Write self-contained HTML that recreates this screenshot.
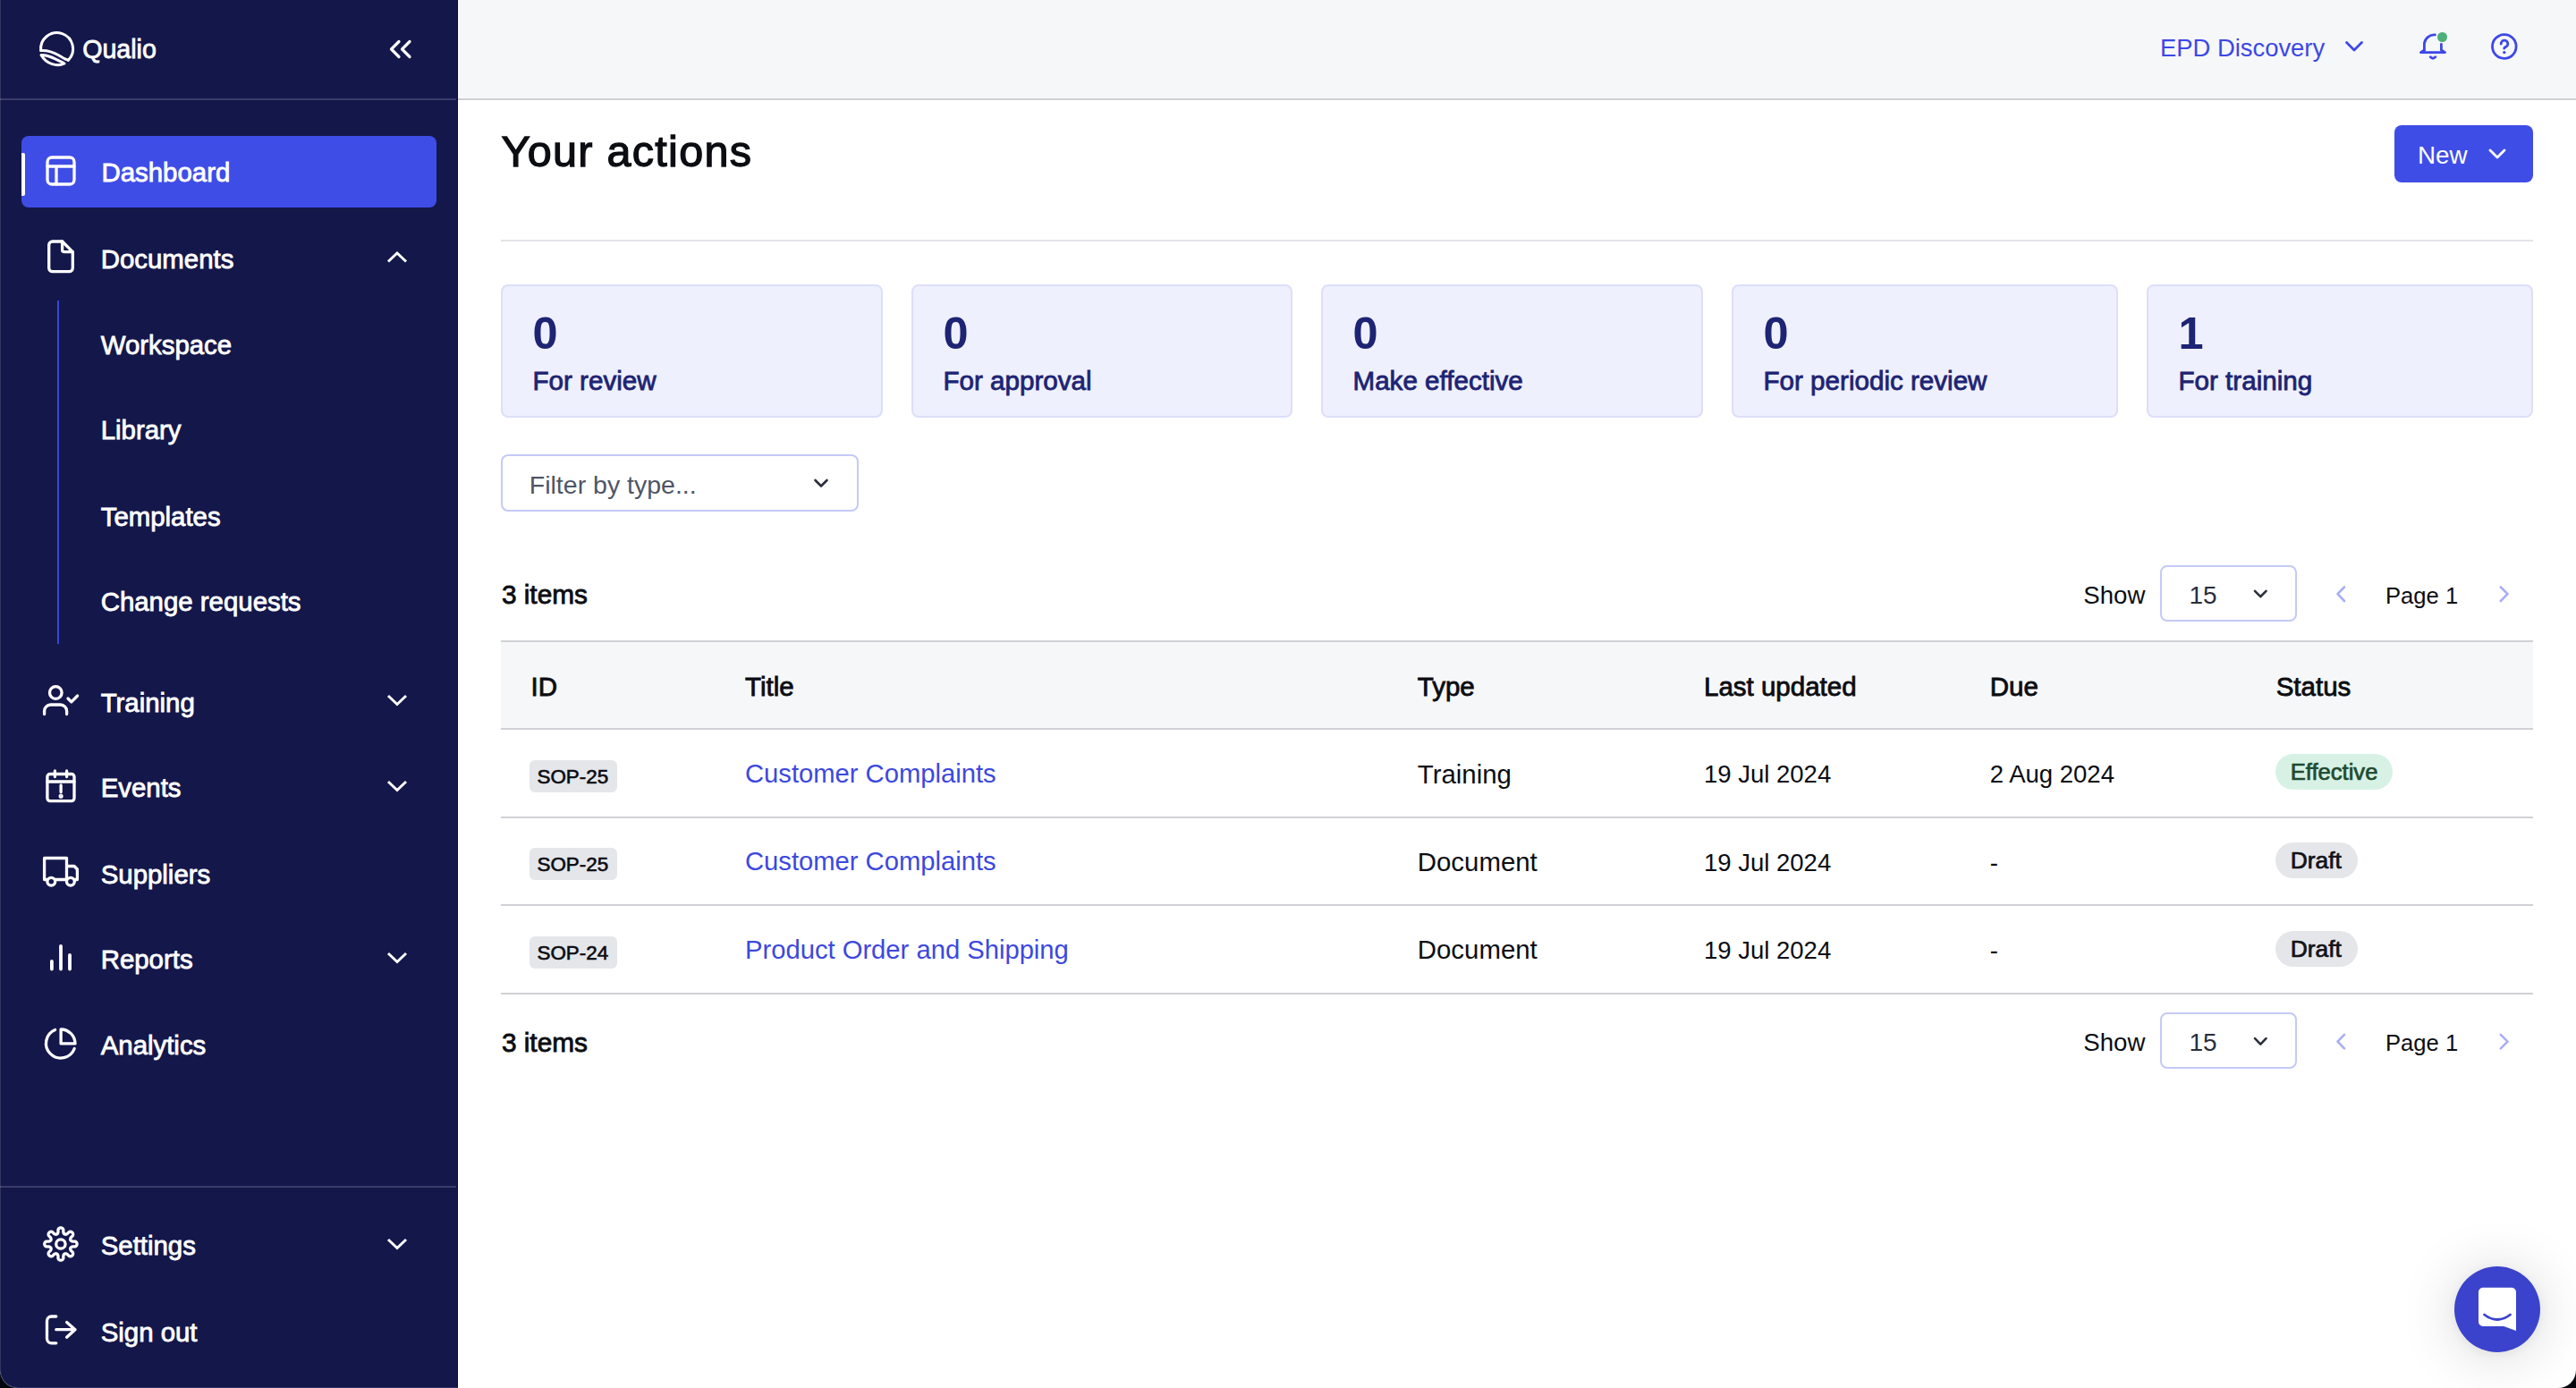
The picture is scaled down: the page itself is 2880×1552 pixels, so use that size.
<!DOCTYPE html>
<html><head><meta charset="utf-8"><title>Qualio</title>
<style>
html,body{margin:0;padding:0;background:#04070d;}
body{width:2880px;height:1552px;overflow:hidden;position:relative;font-family:"Liberation Sans",sans-serif;}
#app{position:absolute;left:0;top:0;width:2880px;height:1552px;background:#fff;border-radius:0 0 20px 20px;overflow:hidden;}
.t{position:absolute;line-height:1;white-space:nowrap;}
@media (max-width:2000px){body{width:1440px;height:776px;} #app{zoom:0.5;}}
</style></head><body><div id="app">
<div style="position:absolute;left:0px;top:0px;width:512px;height:1552px;background:#14174a"></div>
<div style="position:absolute;left:511px;top:0px;width:1px;height:1552px;background:#060b3e"></div>
<div style="position:absolute;left:0px;top:110px;width:510px;height:2px;background:#3a3c69"></div>
<div style="position:absolute;left:0px;top:1326px;width:510px;height:2px;background:#3a3c69"></div>
<svg style="position:absolute;left:36px;top:26px" width="150" height="60" viewBox="0 0 150 60" fill="none" stroke="#fff" stroke-width="3" stroke-linecap="round" stroke-linejoin="round">
<path d="M9.7 30.5 A18 18 0 1 1 40.4 41.2"/>
<path d="M9.7 30.5 C17 30 23 32 30 36 C34 38.5 37.5 41 40.4 41.2"/>
<path d="M10 35.5 C18 35 26 40 36 45 C28 49 16 46 10 35.5 Z"/>
</svg>
<div class="t" style="left:92.2px;top:41.4px;font-size:28.6px;font-weight:400;color:#ffffff;-webkit-text-stroke:0.80px #ffffff;">Qualio</div>
<svg style="position:absolute;left:420px;top:30px" width="60" height="50" viewBox="420 30 60 50" fill="none" stroke="#fff" stroke-width="3.2" stroke-linecap="round" stroke-linejoin="round">
<path d="M446 46.5 L437.5 55 L446 63.5"/><path d="M458 46.5 L449.5 55 L458 63.5"/></svg>
<div style="position:absolute;left:24px;top:152px;width:464px;height:80px;background:#3f4de7;border-radius:8px"></div>
<div style="position:absolute;left:24px;top:171px;width:4px;height:48px;background:#fff;border-radius:0 2px 2px 0"></div>
<svg style="position:absolute;left:0;top:0;overflow:visible" width="512" height="1552" viewBox="0 0 512 1552" fill="none" stroke="#fff" stroke-width="3.3" stroke-linecap="round" stroke-linejoin="round"><rect x="53" y="176" width="30" height="30" rx="5"/><path d="M53 186 H83 M63 186 V206"/><path d="M69.6 270 H58.7 A4 4 0 0 0 54.7 274 V299.7 A4 4 0 0 0 58.7 303.7 H77.3 A4 4 0 0 0 81.3 299.7 V281.7 Z"/><path d="M69.6 270 V279.5 A2.3 2.3 0 0 0 71.9 281.7 H81.3"/><circle cx="62.3" cy="774.5" r="6.8"/><path d="M49.6 798.5 V795 A7 7 0 0 1 56.6 788 H67.6 A7 7 0 0 1 74.6 795 V798.5"/><path d="M76 781 L79.8 784.8 L86.6 778"/><rect x="52.9" y="865.5" width="30.1" height="30.1" rx="3"/><path d="M52.9 874 H83 M61.4 862 V868.5 M74.6 862 V868.5 M68.1 878 V885.8"/><circle cx="68.1" cy="890.3" r="0.9" fill="#fff"/><path d="M52 983.5 H49.6 V959.5 H74.5 V983.5 H62 M74.5 968.5 H83 L86.4 972 V983.5 H84 M74.5 983.5 H73.5"/><circle cx="57.3" cy="985.8" r="4.4"/><circle cx="78.9" cy="985.8" r="4.4"/><path d="M57.9 1075 V1083.5 M68 1058 V1083.5 M78 1068 V1083.5" stroke-width="3.8"/><path d="M61.6 1151.5 A16.4 16.4 0 1 0 83.2 1172.5"/><path d="M68.1 1151 V1166.9 H84 A16 16 0 0 0 68.1 1151 Z"/><path d="M86.10 1391.00 L86.06 1391.48 L85.95 1391.95 L85.75 1392.41 L85.47 1392.85 L85.09 1393.26 L84.58 1393.64 L83.79 1393.94 L81.44 1393.88 L80.65 1394.06 L80.13 1394.28 L79.72 1394.50 L79.40 1394.74 L79.14 1394.98 L78.95 1395.24 L78.80 1395.52 L78.71 1395.81 L78.67 1396.13 L78.67 1396.49 L78.74 1396.88 L78.86 1397.33 L79.08 1397.85 L79.51 1398.54 L81.22 1400.15 L81.56 1400.93 L81.66 1401.56 L81.63 1402.12 L81.52 1402.63 L81.33 1403.09 L81.08 1403.51 L80.77 1403.87 L80.41 1404.18 L79.99 1404.43 L79.53 1404.62 L79.02 1404.73 L78.46 1404.76 L77.83 1404.66 L77.05 1404.32 L75.44 1402.61 L74.75 1402.18 L74.23 1401.96 L73.78 1401.84 L73.39 1401.77 L73.03 1401.77 L72.71 1401.81 L72.42 1401.90 L72.14 1402.05 L71.88 1402.24 L71.64 1402.50 L71.40 1402.82 L71.18 1403.23 L70.96 1403.75 L70.78 1404.54 L70.84 1406.89 L70.54 1407.68 L70.16 1408.19 L69.75 1408.57 L69.31 1408.85 L68.85 1409.05 L68.38 1409.16 L67.90 1409.20 L67.42 1409.16 L66.95 1409.05 L66.49 1408.85 L66.05 1408.57 L65.64 1408.19 L65.26 1407.68 L64.96 1406.89 L65.02 1404.54 L64.84 1403.75 L64.62 1403.23 L64.40 1402.82 L64.16 1402.50 L63.92 1402.24 L63.66 1402.05 L63.38 1401.90 L63.09 1401.81 L62.77 1401.77 L62.41 1401.77 L62.02 1401.84 L61.57 1401.96 L61.05 1402.18 L60.36 1402.61 L58.75 1404.32 L57.97 1404.66 L57.34 1404.76 L56.78 1404.73 L56.27 1404.62 L55.81 1404.43 L55.39 1404.18 L55.03 1403.87 L54.72 1403.51 L54.47 1403.09 L54.28 1402.63 L54.17 1402.12 L54.14 1401.56 L54.24 1400.93 L54.58 1400.15 L56.29 1398.54 L56.72 1397.85 L56.94 1397.33 L57.06 1396.88 L57.13 1396.49 L57.13 1396.13 L57.09 1395.81 L57.00 1395.52 L56.85 1395.24 L56.66 1394.98 L56.40 1394.74 L56.08 1394.50 L55.67 1394.28 L55.15 1394.06 L54.36 1393.88 L52.01 1393.94 L51.22 1393.64 L50.71 1393.26 L50.33 1392.85 L50.05 1392.41 L49.85 1391.95 L49.74 1391.48 L49.70 1391.00 L49.74 1390.52 L49.85 1390.05 L50.05 1389.59 L50.33 1389.15 L50.71 1388.74 L51.22 1388.36 L52.01 1388.06 L54.36 1388.12 L55.15 1387.94 L55.67 1387.72 L56.08 1387.50 L56.40 1387.26 L56.66 1387.02 L56.85 1386.76 L57.00 1386.48 L57.09 1386.19 L57.13 1385.87 L57.13 1385.51 L57.06 1385.12 L56.94 1384.67 L56.72 1384.15 L56.29 1383.46 L54.58 1381.85 L54.24 1381.07 L54.14 1380.44 L54.17 1379.88 L54.28 1379.37 L54.47 1378.91 L54.72 1378.49 L55.03 1378.13 L55.39 1377.82 L55.81 1377.57 L56.27 1377.38 L56.78 1377.27 L57.34 1377.24 L57.97 1377.34 L58.75 1377.68 L60.36 1379.39 L61.05 1379.82 L61.57 1380.04 L62.02 1380.16 L62.41 1380.23 L62.77 1380.23 L63.09 1380.19 L63.38 1380.10 L63.66 1379.95 L63.92 1379.76 L64.16 1379.50 L64.40 1379.18 L64.62 1378.77 L64.84 1378.25 L65.02 1377.46 L64.96 1375.11 L65.26 1374.32 L65.64 1373.81 L66.05 1373.43 L66.49 1373.15 L66.95 1372.95 L67.42 1372.84 L67.90 1372.80 L68.38 1372.84 L68.85 1372.95 L69.31 1373.15 L69.75 1373.43 L70.16 1373.81 L70.54 1374.32 L70.84 1375.11 L70.78 1377.46 L70.96 1378.25 L71.18 1378.77 L71.40 1379.18 L71.64 1379.50 L71.88 1379.76 L72.14 1379.95 L72.42 1380.10 L72.71 1380.19 L73.03 1380.23 L73.39 1380.23 L73.78 1380.16 L74.23 1380.04 L74.75 1379.82 L75.44 1379.39 L77.05 1377.68 L77.83 1377.34 L78.46 1377.24 L79.02 1377.27 L79.53 1377.38 L79.99 1377.57 L80.41 1377.82 L80.77 1378.13 L81.08 1378.49 L81.33 1378.91 L81.52 1379.37 L81.63 1379.88 L81.66 1380.44 L81.56 1381.07 L81.22 1381.85 L79.51 1383.46 L79.08 1384.15 L78.86 1384.67 L78.74 1385.12 L78.67 1385.51 L78.67 1385.87 L78.71 1386.19 L78.80 1386.48 L78.95 1386.76 L79.14 1387.02 L79.40 1387.26 L79.72 1387.50 L80.13 1387.72 L80.65 1387.94 L81.44 1388.12 L83.79 1388.06 L84.58 1388.36 L85.09 1388.74 L85.47 1389.15 L85.75 1389.59 L85.95 1390.05 L86.06 1390.52 L86.10 1391.00 Z"/><circle cx="67.9" cy="1391.0" r="5.2"/><path d="M62.8 1472 H57.5 A5 5 0 0 0 52.5 1477 V1496.8 A5 5 0 0 0 57.5 1501.8 H62.8"/><path d="M62.8 1486.7 H84 M74.6 1478.6 L84 1486.7 L74.6 1495.2"/><path d="M434 292.5 L444 283.0 L454 292.5" stroke-width="3" stroke-linecap="butt" stroke-linejoin="miter"/><path d="M434 778 L444 787.5 L454 778" stroke-width="3" stroke-linecap="butt" stroke-linejoin="miter"/><path d="M434 874 L444 883.5 L454 874" stroke-width="3" stroke-linecap="butt" stroke-linejoin="miter"/><path d="M434 1066 L444 1075.5 L454 1066" stroke-width="3" stroke-linecap="butt" stroke-linejoin="miter"/><path d="M434 1386 L444 1395.5 L454 1386" stroke-width="3" stroke-linecap="butt" stroke-linejoin="miter"/></svg>
<div style="position:absolute;left:64px;top:336px;width:2px;height:384px;background:#3847d6"></div>
<div class="t" style="left:113.5px;top:178.3px;font-size:29.4px;font-weight:400;color:#ffffff;-webkit-text-stroke:0.82px #ffffff;">Dashboard</div>
<div class="t" style="left:112.7px;top:274.5px;font-size:29.4px;font-weight:400;color:#ffffff;-webkit-text-stroke:0.82px #ffffff;">Documents</div>
<div class="t" style="left:112.7px;top:370.7px;font-size:29.4px;font-weight:400;color:#ffffff;-webkit-text-stroke:0.82px #ffffff;">Workspace</div>
<div class="t" style="left:112.7px;top:466.4px;font-size:29.4px;font-weight:400;color:#ffffff;-webkit-text-stroke:0.82px #ffffff;">Library</div>
<div class="t" style="left:112.7px;top:562.6px;font-size:29.4px;font-weight:400;color:#ffffff;-webkit-text-stroke:0.82px #ffffff;">Templates</div>
<div class="t" style="left:112.7px;top:658.1px;font-size:29.4px;font-weight:400;color:#ffffff;-webkit-text-stroke:0.82px #ffffff;">Change requests</div>
<div class="t" style="left:112.7px;top:770.9px;font-size:29.4px;font-weight:400;color:#ffffff;-webkit-text-stroke:0.82px #ffffff;">Training</div>
<div class="t" style="left:112.7px;top:866.3px;font-size:29.4px;font-weight:400;color:#ffffff;-webkit-text-stroke:0.82px #ffffff;">Events</div>
<div class="t" style="left:112.7px;top:962.5px;font-size:29.4px;font-weight:400;color:#ffffff;-webkit-text-stroke:0.82px #ffffff;">Suppliers</div>
<div class="t" style="left:112.7px;top:1058.3px;font-size:29.4px;font-weight:400;color:#ffffff;-webkit-text-stroke:0.82px #ffffff;">Reports</div>
<div class="t" style="left:112.7px;top:1154.4px;font-size:29.4px;font-weight:400;color:#ffffff;-webkit-text-stroke:0.82px #ffffff;">Analytics</div>
<div class="t" style="left:112.7px;top:1378.1px;font-size:29.4px;font-weight:400;color:#ffffff;-webkit-text-stroke:0.82px #ffffff;">Settings</div>
<div class="t" style="left:112.7px;top:1474.8px;font-size:29.4px;font-weight:400;color:#ffffff;-webkit-text-stroke:0.82px #ffffff;">Sign out</div>
<div style="position:absolute;left:512px;top:0px;width:2368px;height:110px;background:#f6f7f9"></div>
<div style="position:absolute;left:512px;top:110px;width:2368px;height:2px;background:#d0d1d6"></div>
<div class="t" style="left:2415.0px;top:39.7px;font-size:27.4px;font-weight:400;color:#3c48e6;">EPD Discovery</div>
<svg style="position:absolute;left:0;top:0;overflow:visible" width="2880" height="120" viewBox="0 0 2880 120" fill="none" stroke="#3c48e6" stroke-width="2.8" stroke-linecap="round" stroke-linejoin="round">
<path d="M2623.5 47.5 L2632 56 L2640.5 47.5"/>
<path d="M2710.4 56 V48.5 A11.5 11.5 0 0 1 2722.4 38.8"/>
<path d="M2729.4 49.5 V56 M2706.5 58.6 H2733.5 M2706.5 58.6 L2710.4 56 M2733.5 58.6 L2729.4 56"/>
<path d="M2717.2 63.8 Q2720 66.5 2722.8 63.8"/>
<circle cx="2799.8" cy="52" r="13.3"/>
<path d="M2796.2 49.2 A3.8 3.8 0 1 1 2801.1 52.6 Q2799.7 53.3 2799.7 54.2"/>
<circle cx="2799.8" cy="58.6" r="1.7" fill="#3c48e6" stroke="none"/>
</svg>
<div style="position:absolute;left:2725.3px;top:35.8px;width:10.8px;height:10.8px;border-radius:50%;background:#4caf7c"></div>
<div class="t" style="left:560.5px;top:145.2px;font-size:48.5px;font-weight:400;color:#0c0d12;letter-spacing:1.3px;-webkit-text-stroke:1.30px #0c0d12;">Your actions</div>
<div style="position:absolute;left:2677px;top:140px;width:155px;height:64px;background:#3f4de7;border-radius:8px"></div>
<div class="t" style="left:2703.0px;top:160.0px;font-size:27.8px;font-weight:400;color:#fff;">New</div>
<svg style="position:absolute;left:0;top:0;overflow:visible" width="2880" height="220" viewBox="0 0 2880 220" fill="none" stroke="#fff" stroke-width="2.8" stroke-linecap="round" stroke-linejoin="round"><path d="M2784 168 L2792 176 L2800 168"/></svg>
<div style="position:absolute;left:560px;top:268px;width:2272px;height:2px;background:#e3e4e8"></div>
<div style="position:absolute;left:560px;top:318px;width:423px;height:145px;background:#eff0fd;border:2px solid #dcdff9;border-radius:8px"></div>
<div class="t" style="left:595.5px;top:347.9px;font-size:50.5px;font-weight:700;color:#1d2473;">0</div>
<div class="t" style="left:595.5px;top:410.9px;font-size:29.6px;font-weight:400;color:#1d2473;-webkit-text-stroke:0.83px #1d2473;">For review</div>
<div style="position:absolute;left:1019px;top:318px;width:422px;height:145px;background:#eff0fd;border:2px solid #dcdff9;border-radius:8px"></div>
<div class="t" style="left:1054.5px;top:347.9px;font-size:50.5px;font-weight:700;color:#1d2473;">0</div>
<div class="t" style="left:1054.5px;top:410.9px;font-size:29.6px;font-weight:400;color:#1d2473;-webkit-text-stroke:0.83px #1d2473;">For approval</div>
<div style="position:absolute;left:1477px;top:318px;width:423px;height:145px;background:#eff0fd;border:2px solid #dcdff9;border-radius:8px"></div>
<div class="t" style="left:1512.5px;top:347.9px;font-size:50.5px;font-weight:700;color:#1d2473;">0</div>
<div class="t" style="left:1512.5px;top:410.9px;font-size:29.6px;font-weight:400;color:#1d2473;-webkit-text-stroke:0.83px #1d2473;">Make effective</div>
<div style="position:absolute;left:1936px;top:318px;width:428px;height:145px;background:#eff0fd;border:2px solid #dcdff9;border-radius:8px"></div>
<div class="t" style="left:1971.5px;top:347.9px;font-size:50.5px;font-weight:700;color:#1d2473;">0</div>
<div class="t" style="left:1971.5px;top:410.9px;font-size:29.6px;font-weight:400;color:#1d2473;-webkit-text-stroke:0.83px #1d2473;">For periodic review</div>
<div style="position:absolute;left:2400px;top:318px;width:428px;height:145px;background:#eff0fd;border:2px solid #dcdff9;border-radius:8px"></div>
<div class="t" style="left:2435.5px;top:347.9px;font-size:50.5px;font-weight:700;color:#1d2473;">1</div>
<div class="t" style="left:2435.5px;top:410.9px;font-size:29.6px;font-weight:400;color:#1d2473;-webkit-text-stroke:0.83px #1d2473;">For training</div>
<div style="position:absolute;left:560px;top:508px;width:396px;height:60px;background:#fff;border:2px solid #c5c9f7;border-radius:8px"></div>
<div class="t" style="left:591.8px;top:527.5px;font-size:28.5px;font-weight:400;color:#4f5565;">Filter by type...</div>
<div class="t" style="left:560.9px;top:650.2px;font-size:29.8px;font-weight:400;color:#0c0d12;-webkit-text-stroke:0.83px #0c0d12;">3 items</div>
<div class="t" style="left:2329.3px;top:651.8px;font-size:27.6px;font-weight:400;color:#0c0d12;">Show</div>
<div style="position:absolute;left:2415px;top:632px;width:149px;height:59px;background:#fff;border:2px solid #c5c9f7;border-radius:8px"></div>
<div class="t" style="left:2447.5px;top:651.5px;font-size:28px;font-weight:400;color:#2b2e3b;">15</div>
<div class="t" style="left:2667.0px;top:653.5px;font-size:25.6px;font-weight:400;color:#0c0d12;">Page 1</div>
<div class="t" style="left:560.9px;top:1150.6px;font-size:29.8px;font-weight:400;color:#0c0d12;-webkit-text-stroke:0.83px #0c0d12;">3 items</div>
<div class="t" style="left:2329.3px;top:1152.2px;font-size:27.6px;font-weight:400;color:#0c0d12;">Show</div>
<div style="position:absolute;left:2415px;top:1132.4px;width:149px;height:59px;background:#fff;border:2px solid #c5c9f7;border-radius:8px"></div>
<div class="t" style="left:2447.5px;top:1151.9px;font-size:28px;font-weight:400;color:#2b2e3b;">15</div>
<div class="t" style="left:2667.0px;top:1153.9px;font-size:25.6px;font-weight:400;color:#0c0d12;">Page 1</div>
<svg style="position:absolute;left:0;top:0;overflow:visible" width="2880" height="1552" viewBox="0 0 2880 1552" fill="none" stroke="#2b2e3b" stroke-width="2.6" stroke-linecap="round" stroke-linejoin="round"><path d="M911.5 537 L918 543.5 L924.5 537"/><path d="M2521 660.8 L2527.3 667.2 L2533.5 660.8"/><path d="M2521 1161.1999999999998 L2527.3 1167.6 L2533.5 1161.1999999999998"/></svg>
<svg style="position:absolute;left:0;top:0;overflow:visible" width="2880" height="1552" viewBox="0 0 2880 1552" fill="none" stroke="#a8aef5" stroke-width="2.6" stroke-linecap="round" stroke-linejoin="round"><path d="M2621 656.5 L2613.5 664.2 L2621 672"/><path d="M2795.8 656.5 L2803.5 664.2 L2795.8 672"/><path d="M2621 1156.9 L2613.5 1164.6 L2621 1172.4"/><path d="M2795.8 1156.9 L2803.5 1164.6 L2795.8 1172.4"/></svg>
<div style="position:absolute;left:560px;top:716px;width:2272px;height:2px;background:#d0d1d6"></div>
<div style="position:absolute;left:560px;top:718px;width:2272px;height:96px;background:#f6f7f9"></div>
<div style="position:absolute;left:560px;top:814px;width:2272px;height:2px;background:#d0d1d6"></div>
<div style="position:absolute;left:560px;top:913px;width:2272px;height:2px;background:#d0d1d6"></div>
<div style="position:absolute;left:560px;top:1011px;width:2272px;height:2px;background:#d0d1d6"></div>
<div style="position:absolute;left:560px;top:1110px;width:2272px;height:2px;background:#d0d1d6"></div>
<div class="t" style="left:593.6px;top:752.8px;font-size:29.5px;font-weight:400;color:#0c0d12;-webkit-text-stroke:0.83px #0c0d12;">ID</div>
<div class="t" style="left:833.0px;top:752.8px;font-size:29.5px;font-weight:400;color:#0c0d12;-webkit-text-stroke:0.83px #0c0d12;">Title</div>
<div class="t" style="left:1584.8px;top:752.8px;font-size:29.5px;font-weight:400;color:#0c0d12;-webkit-text-stroke:0.83px #0c0d12;">Type</div>
<div class="t" style="left:1905.0px;top:752.8px;font-size:29.5px;font-weight:400;color:#0c0d12;-webkit-text-stroke:0.83px #0c0d12;">Last updated</div>
<div class="t" style="left:2224.8px;top:752.8px;font-size:29.5px;font-weight:400;color:#0c0d12;-webkit-text-stroke:0.83px #0c0d12;">Due</div>
<div class="t" style="left:2544.7px;top:752.8px;font-size:29.5px;font-weight:400;color:#0c0d12;-webkit-text-stroke:0.83px #0c0d12;">Status</div>
<div style="position:absolute;left:592px;top:850px;width:98px;height:36px;background:#e5e6ea;border-radius:6px"></div>
<div class="t" style="left:600.5px;top:858.0px;font-size:22.4px;font-weight:400;color:#0c0d12;-webkit-text-stroke:0.63px #0c0d12;">SOP-25</div>
<div class="t" style="left:833.0px;top:850.8px;font-size:29.2px;font-weight:400;color:#3c48e0;">Customer Complaints</div>
<div class="t" style="left:1584.8px;top:850.6px;font-size:29.4px;font-weight:400;color:#0c0d12;">Training</div>
<div class="t" style="left:1905.0px;top:852.2px;font-size:27.5px;font-weight:400;color:#0c0d12;">19 Jul 2024</div>
<div class="t" style="left:2224.8px;top:852.2px;font-size:27.5px;font-weight:400;color:#0c0d12;">2 Aug 2024</div>
<div style="position:absolute;left:2544px;top:843px;width:131px;height:40px;background:#d7f2e4;border-radius:20px"></div>
<div class="t" style="left:2560.7px;top:850.8px;font-size:25.6px;font-weight:400;color:#1e4b32;-webkit-text-stroke:0.72px #1e4b32;">Effective</div>
<div style="position:absolute;left:592px;top:948px;width:98px;height:36px;background:#e5e6ea;border-radius:6px"></div>
<div class="t" style="left:600.5px;top:956.0px;font-size:22.4px;font-weight:400;color:#0c0d12;-webkit-text-stroke:0.63px #0c0d12;">SOP-25</div>
<div class="t" style="left:833.0px;top:949.2px;font-size:29.2px;font-weight:400;color:#3c48e0;">Customer Complaints</div>
<div class="t" style="left:1584.8px;top:949.0px;font-size:29.4px;font-weight:400;color:#0c0d12;">Document</div>
<div class="t" style="left:1905.0px;top:950.6px;font-size:27.5px;font-weight:400;color:#0c0d12;">19 Jul 2024</div>
<div class="t" style="left:2224.8px;top:950.6px;font-size:27.5px;font-weight:400;color:#0c0d12;">-</div>
<div style="position:absolute;left:2544px;top:942px;width:92px;height:40px;background:#e5e6ea;border-radius:20px"></div>
<div class="t" style="left:2560.7px;top:949.2px;font-size:26.4px;font-weight:400;color:#111318;-webkit-text-stroke:0.74px #111318;">Draft</div>
<div style="position:absolute;left:592px;top:1047px;width:98px;height:36px;background:#e5e6ea;border-radius:6px"></div>
<div class="t" style="left:600.5px;top:1055.0px;font-size:22.4px;font-weight:400;color:#0c0d12;-webkit-text-stroke:0.63px #0c0d12;">SOP-24</div>
<div class="t" style="left:833.0px;top:1047.6px;font-size:29.2px;font-weight:400;color:#3c48e0;">Product Order and Shipping</div>
<div class="t" style="left:1584.8px;top:1047.4px;font-size:29.4px;font-weight:400;color:#0c0d12;">Document</div>
<div class="t" style="left:1905.0px;top:1049.0px;font-size:27.5px;font-weight:400;color:#0c0d12;">19 Jul 2024</div>
<div class="t" style="left:2224.8px;top:1049.0px;font-size:27.5px;font-weight:400;color:#0c0d12;">-</div>
<div style="position:absolute;left:2544px;top:1040.5px;width:92px;height:40px;background:#e5e6ea;border-radius:20px"></div>
<div class="t" style="left:2560.7px;top:1047.7px;font-size:26.4px;font-weight:400;color:#111318;-webkit-text-stroke:0.74px #111318;">Draft</div>
<div style="position:absolute;left:2744px;top:1416px;width:96px;height:96px;border-radius:50%;background:#3b43cc;box-shadow:0 2px 12px rgba(0,0,0,.06),0 4px 64px rgba(0,0,0,.16)"></div>
<svg style="position:absolute;left:0;top:0;overflow:visible" width="2880" height="1552" viewBox="0 0 2880 1552">
<path d="M2776 1439.8 H2808 A5 5 0 0 1 2813 1444.8 V1488 L2799.3 1482.9 H2776 A5 5 0 0 1 2771 1477.9 V1444.8 A5 5 0 0 1 2776 1439.8 Z" fill="#fff"/>
<path d="M2777.5 1470 Q2792 1481 2806.5 1470" fill="none" stroke="#3b43cc" stroke-width="2.8" stroke-linecap="round"/>
</svg>
<div style="position:absolute;left:0;top:0;width:2880px;height:1552px;box-sizing:border-box;border-left:1px solid rgba(255,255,255,.13);border-bottom:1px solid rgba(255,255,255,.13);border-radius:0 0 20px 20px;"></div>
</div></body></html>
